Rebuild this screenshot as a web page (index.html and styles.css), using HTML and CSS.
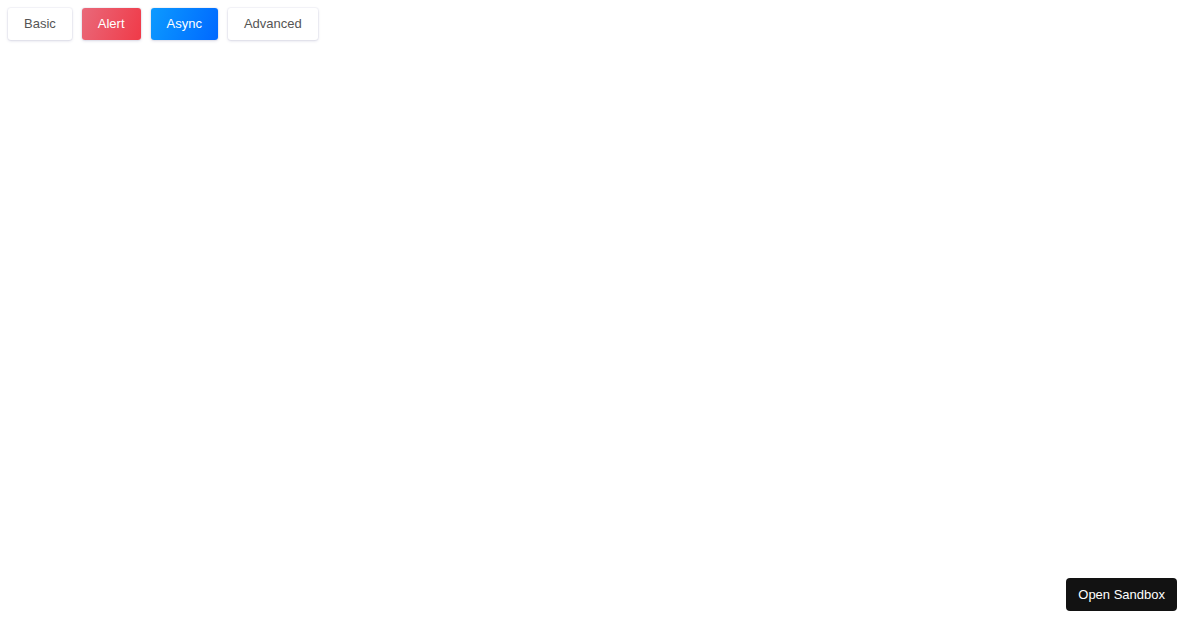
FILE: index.html
```html
<!DOCTYPE html>
<html>
<head>
<meta charset="utf-8">
<link rel="stylesheet" href="styles.css">
</head>
<body>
<div class="toolbar">
  <button class="btn btn-default">Basic</button>
  <button class="btn btn-danger">Alert</button>
  <button class="btn btn-primary">Async</button>
  <button class="btn btn-default">Advanced</button>
</div>
<button class="sandbox">Open Sandbox</button>
</body>
</html>
```
FILE: styles.css
```css
html, body {
  margin: 0;
  padding: 0;
  background: #fff;
  font-family: "Liberation Sans", Arial, sans-serif;
}
.toolbar {
  display: flex;
  gap: 10px;
  padding: 8px;
}
.btn {
  height: 32px;
  border: none;
  border-radius: 3px;
  font-family: "Liberation Sans", Arial, sans-serif;
  font-size: 13px;
  padding: 0 16px 2px;
  cursor: pointer;
  box-shadow: 0 1px 3px rgba(60, 60, 120, 0.18), 0 0 0 1px rgba(60, 60, 120, 0.04);
}
.btn-default {
  background: #fff;
  color: #555;
}
.btn-danger {
  background: linear-gradient(110deg, #e9697a 0%, #f03a48 100%);
  color: #fff;
}
.btn-primary {
  background: linear-gradient(110deg, #0c9aff 0%, #0068ff 100%);
  color: #fff;
}
.sandbox {
  position: fixed;
  right: 23px;
  bottom: 19px;
  height: 33px;
  padding: 0 12px;
  background: #121212;
  color: #fff;
  border: none;
  border-radius: 4px;
  font-family: "Liberation Sans", Arial, sans-serif;
  font-size: 13px;
}
```
